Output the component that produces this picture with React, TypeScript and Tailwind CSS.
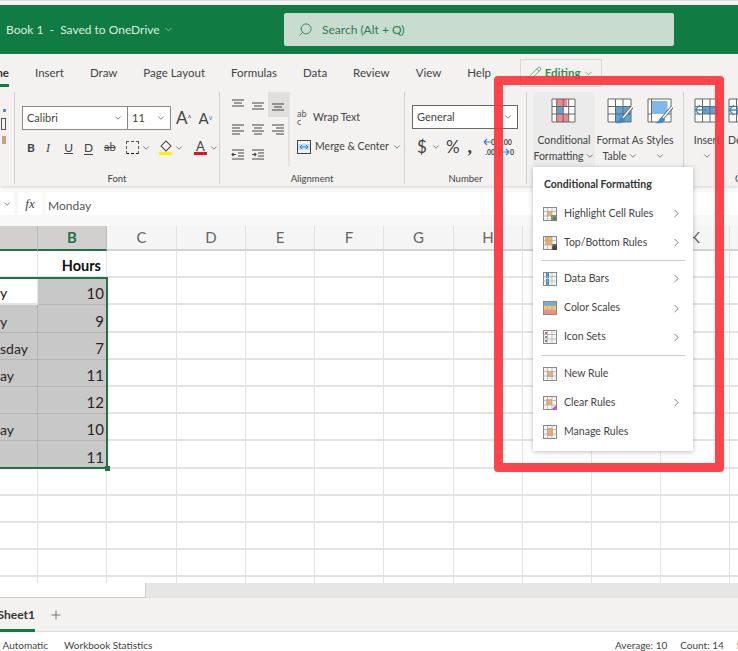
import React from "react";
import { ChevronDown, ChevronRight, Pencil, Plus, Search } from "lucide-react";

const tabs = ["Insert", "Draw", "Page Layout", "Formulas", "Data", "Review", "View", "Help"];
const columns = ["", "B", "C", "D", "E", "F", "G", "H", "I", "J", "K", ""];

const rows = [
  { a: "", b: "Hours" },
  { a: "y", b: "10" },
  { a: "y", b: "9" },
  { a: "sday", b: "7" },
  { a: "ay", b: "11" },
  { a: "", b: "12" },
  { a: "ay", b: "10" },
  { a: "", b: "11" },
  { a: "", b: "" },
  { a: "", b: "" },
  { a: "", b: "" },
  { a: "", b: "" },
  { a: "", b: "" },
];

const Chev = ({ className = "" }: { className?: string }) => (
  <ChevronDown size={10} strokeWidth={1.6} className={`text-[#444] shrink-0 ${className}`} />
);

const Lines = ({ d, color = "#444" }: { d: string; color?: string }) => (
  <svg width="16" height="16" viewBox="0 0 16 16" fill="none" stroke={color} strokeWidth="1.1">
    <path d={d} />
  </svg>
);

const alignIcons = [
  "M2 3h12M4 6h8M2 9h12",
  "M2 6h12M4 9h8M2 12h12",
  "M2 7h12M4 10h8M2 13h12",
  "M2 3h12M2 6h8M2 9h12M2 12h8",
  "M2 3h12M4 6h8M2 9h12M4 12h8",
  "M2 3h12M6 6h8M2 9h12M6 12h8",
];

const MiniGrid = ({ children }: { children?: React.ReactNode }) => (
  <svg width="14" height="14" viewBox="0 0 14 14" className="shrink-0">
    <rect x="0.5" y="0.5" width="13" height="13" fill="#f4f4f4" stroke="#888" />
    {children}
    <path d="M0.5 4.5h13M0.5 9h13M4.5 0.5v13M9 0.5v13" stroke="#aaa" strokeWidth="0.7" fill="none" />
  </svg>
);

const menuIcons: Record<string, React.ReactNode> = {
  "Highlight Cell Rules": (
    <>
      <rect x="4" y="4" width="5" height="5" fill="#f0b060" />
      <rect x="8" y="8" width="6" height="6" fill="#777" />
    </>
  ),
  "Top/Bottom Rules": (
    <>
      <rect x="2" y="1" width="7" height="8" fill="#f0b060" />
      <rect x="9" y="8" width="5" height="6" fill="#444" />
    </>
  ),
  "Data Bars": (
    <>
      <rect x="3" y="1" width="3" height="5" fill="#2b88d8" />
      <rect x="3" y="7" width="3" height="6" fill="#2b88d8" />
    </>
  ),
  "Color Scales": (
    <>
      <rect x="1" y="1" width="12" height="4" fill="#6aaee8" />
      <rect x="1" y="5" width="12" height="4" fill="#f8c860" />
      <rect x="1" y="9" width="12" height="4" fill="#f48a8a" />
    </>
  ),
  "Icon Sets": (
    <>
      <rect x="2" y="2" width="2" height="2" fill="#d86060" />
      <rect x="2" y="6" width="2" height="2" fill="#888" />
      <rect x="2" y="10" width="2" height="2" fill="#888" />
    </>
  ),
  "New Rule": <rect x="4" y="4" width="6" height="6" fill="#f0b060" />,
  "Clear Rules": (
    <>
      <rect x="3" y="3" width="6" height="6" fill="#f0b060" />
      <path d="M8 14l5-5 2 2-5 4z" fill="#b060d0" />
    </>
  ),
  "Manage Rules": <rect x="4" y="3" width="6" height="8" fill="#f0b060" />,
};

const MenuItem = ({ label, arrow = false }: { label: string; arrow?: boolean }) => (
  <div className="h-[29.2px] flex items-center pl-[10px] pr-[10px] text-[10.5px] text-[#444]">
    <MiniGrid>{menuIcons[label]}</MiniGrid>
    <span className="ml-[7px] flex-1">{label}</span>
    {arrow && <ChevronRight size={13} strokeWidth={1.3} className="text-[#444]" />}
  </div>
);

const GroupLabel = ({ text, className = "" }: { text: string; className?: string }) => (
  <div className={`mt-auto text-center text-[9.5px] leading-[10px] text-[#444] ${className}`}>{text}</div>
);

const LargeButton = ({
  icon,
  top,
  bottom,
  className = "",
}: {
  icon: React.ReactNode;
  top: string;
  bottom: string;
  className?: string;
}) => (
  <div className={`shrink-0 flex flex-col items-center pt-[6px] text-[10.5px] leading-[16px] text-[#444] ${className}`}>
    {icon}
    <div className="mt-[8px] whitespace-nowrap">{top}</div>
    <div className="flex items-center gap-[1px] whitespace-nowrap">
      {bottom}
      <Chev />
    </div>
  </div>
);

const TableIcon = ({ fill }: { fill: React.ReactNode }) => (
  <svg width="26" height="26" viewBox="0 0 26 26" fill="none" className="shrink-0">
    <rect x="1" y="1" width="23" height="23" fill="#fff" />
    {fill}
  </svg>
);

const GridLines = () => (
  <path d="M1 1h23v23H1zM1 8.5h23M1 16h23M8.5 1v23M16 1v23" stroke="#666" strokeWidth="1" />
);

const Brush = () => (
  <g>
    <path d="M25 9L15 21" stroke="#666" strokeWidth="3.4" />
    <path d="M25 9L15 21" stroke="#fff" strokeWidth="1.6" />
    <path d="M15 19c-3 1-3 5-7 6 5 1 10 0 10-4z" fill="#3f8ccb" />
  </g>
);

const InsertIcon = () => (
  <TableIcon
    fill={
      <>
        <rect x="9" y="8.5" width="15" height="7.5" fill="#5ba3dd" />
        <GridLines />
        <path d="M12 12H1M1 12l5-5M1 12l5 5" stroke="#3f8ccb" strokeWidth="1.4" />
      </>
    }
  />
);

export default function App() {
  return (
    <div className="w-[738px] h-[651px] overflow-hidden relative bg-white font-['Lato',sans-serif]">
      <div className="h-[5px] bg-[#f4f4f4] border-t border-[#ddd]" />

      {/* title bar */}
      <div className="h-[49px] bg-[#107b43] flex items-center pl-[6px]">
        <div className="flex items-center w-[278px] shrink-0 text-[12px] text-[#dcebe2]">
          <span className="whitespace-pre">Book 1  -  Saved to OneDrive</span>
          <ChevronDown size={11} strokeWidth={1.3} className="ml-[3px]" />
        </div>
        <div className="w-[390px] h-[33px] shrink-0 bg-[#c8dccf] rounded-[2px] flex items-center pl-[14px] text-[12px] text-[#2f7d52]">
          <Search size={15} strokeWidth={1.4} className="-scale-x-100" />
          <span className="ml-[9px]">Search (Alt + Q)</span>
        </div>
      </div>

      <div className="bg-[#f3f2f1] h-[132px] shadow-[0_2px_3px_#ddd]">
        {/* tabs */}
        <div className="h-[38px] flex items-center gap-[26px] -ml-[27px] text-[11.5px] text-[#444] relative">
          <div className="w-[36px] h-[38px] flex items-center justify-end relative font-bold text-[#333]">
            Home
            <div className="absolute bottom-[5px] left-0 right-0 h-[3px] bg-[#107b43]" />
          </div>
          {tabs.map((tab) => (
            <span key={tab} className="whitespace-nowrap">
              {tab}
            </span>
          ))}
          <div className="ml-[3px] w-[82px] h-[28px] border border-[#d9d9d9] flex items-center justify-center gap-[3px] text-[#2f9158] font-bold shrink-0">
            <Pencil size={14} strokeWidth={1.2} />
            Editing
            <ChevronDown size={11} strokeWidth={1.5} />
          </div>
        </div>

        {/* ribbon */}
        <div className="h-[94px] flex">
          <div className="w-[15px] h-[92px] shrink-0 border-r border-[#cfcfcf] flex flex-col items-end pr-[8px] pt-[17px] gap-[6px] text-[#777]">
            <div className="w-[3px] h-[3px] bg-[#4a90d0]" />
            <div className="w-[5px] h-[12px] border border-[#555]" />
            <div className="w-[4px] h-[8px] bg-[#c9a27a]" />
          </div>

          {/* font */}
          <div className="w-[205px] h-[92px] shrink-0 border-r border-[#cfcfcf] flex flex-col pl-[7px] pt-[13px]">
            <div className="flex items-center">
              <div className="w-[106px] h-[24px] bg-white border border-[#888] flex items-center justify-between px-[4px] text-[11px] text-[#444]">
                Calibri
                <Chev />
              </div>
              <div className="w-[43px] h-[24px] bg-white border border-l-0 border-[#888] flex items-center justify-between px-[4px] text-[11px] text-[#444]">
                11
                <Chev />
              </div>
              <span className="ml-[5px] text-[17px] text-[#444]">
                A<sup className="text-[7px] text-[#444]">^</sup>
              </span>
              <span className="ml-[7px] text-[15px] text-[#444]">
                A<sup className="text-[7px] text-[#2b88d8]">v</sup>
              </span>
            </div>
            <div className="flex items-center mt-[6px] pl-[5px] gap-[11px] text-[12px] text-[#444] h-[22px]">
              <span className="w-[9px] font-bold">B</span>
              <span className="w-[9px] italic font-['Liberation_Serif',serif]">I</span>
              <span className="w-[9px] underline">U</span>
              <span className="w-[9px] border-b border-[#444] leading-[13px]">D</span>
              <span className="w-[11px] line-through text-[11px]">ab</span>
              <div className="flex items-center gap-[2px] -mr-[1px]">
                <div className="w-[13px] h-[13px] border border-dashed border-[#555] border-b-black" />
                <Chev />
              </div>
              <div className="flex items-center gap-[2px] -ml-[2px] -mr-[1px]">
                <div className="w-[13px] h-[14px] flex flex-col items-center">
                  <div className="w-[8px] h-[8px] border border-[#444] rotate-45 mt-[1px] mb-[1px]" />
                  <div className="w-[13px] h-[3px] mt-auto bg-[#ffef00]" />
                </div>
                <Chev />
              </div>
              <div className="flex items-center gap-[2px]">
                <div className="w-[13px] flex flex-col items-center leading-[11px] text-[13px]">
                  A
                  <div className="w-[13px] h-[3px] bg-[#e81123]" />
                </div>
                <Chev />
              </div>
            </div>
            <GroupLabel text="Font" className="pr-[7px]" />
          </div>

          {/* alignment */}
          <div className="w-[185px] h-[92px] shrink-0 border-r border-[#cfcfcf] flex flex-col">
            <div className="flex h-[78px]">
              <div className="w-[70px] pl-[8px] grid grid-cols-[20px_20px_20px] grid-rows-[25px_25px_25px] border-r-2 border-[#e4e3e2] mb-[4px]">
                {alignIcons.map((d, i) => (
                  <div key={i} className={`flex items-center justify-center ${i === 2 ? "bg-[#e1dfdd]" : ""}`}>
                    <Lines d={d} />
                  </div>
                ))}
                <div className="flex items-center justify-center">
                  <Lines d="M2 3h12M8 6h6M8 9h6M2 12h12M6 7.5H2M3.5 6L2 7.5 3.5 9" />
                </div>
                <div className="flex items-center justify-center">
                  <Lines d="M2 3h12M8 6h6M8 9h6M2 12h12M2 7.5h4M4.5 6L6 7.5 4.5 9" />
                </div>
              </div>
              <div className="pl-[7px] pt-[17px] text-[10.5px] text-[#444] flex flex-col gap-[12px]">
                <div className="flex items-center gap-[3px] h-[17px]">
                  <span className="text-[9px] leading-[8px] w-[13px] text-[#555]">ab c</span>
                  Wrap Text
                </div>
                <div className="flex items-center gap-[3px] h-[17px] whitespace-nowrap">
                  <svg width="14" height="14" viewBox="0 0 14 14" fill="none" className="mr-[1px]">
                    <rect x="0.5" y="0.5" width="13" height="13" stroke="#444" />
                    <rect x="1" y="4" width="12" height="6" fill="#bfdcf3" />
                    <path d="M3 7h8M3 7l2-2M3 7l2 2M11 7L9 5M11 7L9 9" stroke="#2b88d8" />
                  </svg>
                  Merge &amp; Center
                  <Chev />
                </div>
              </div>
            </div>
            <GroupLabel text="Alignment" />
          </div>

          {/* number */}
          <div className="w-[122px] h-[92px] shrink-0 border-r border-[#cfcfcf] flex flex-col pl-[7px] pt-[13px]">
            <div className="w-[106px] h-[24px] bg-white border border-[#666] flex items-center justify-between px-[4px] text-[11px] text-[#444]">
              General
              <Chev />
            </div>
            <div className="flex items-center mt-[7px] pl-[5px] h-[22px] text-[#444]">
              <span className="text-[17px]">$</span>
              <Chev className="ml-[4px]" />
              <span className="ml-[5px] text-[17px]">%</span>
              <span className="ml-[8px] text-[18px] font-bold font-['Liberation_Serif',serif] leading-[14px]">,</span>
              <div className="ml-[8px] w-[15px] flex flex-col items-end gap-[1px] text-[7px] leading-[9px] font-bold">
                <span className="flex items-center">
                  <svg width="8" height="8" viewBox="0 0 8 8" fill="none" stroke="#2b88d8" strokeWidth="1.2">
                    <path d="M8 4H1M1 4l3-3M1 4l3 3" />
                  </svg>
                  0
                </span>
                <span>.00</span>
              </div>
              <div className="ml-[7px] w-[15px] flex flex-col items-start gap-[1px] text-[7px] leading-[9px] font-bold">
                <span>.00</span>
                <span className="flex items-center">
                  <svg width="8" height="8" viewBox="0 0 8 8" fill="none" stroke="#2b88d8" strokeWidth="1.2">
                    <path d="M0 4h7M7 4L4 1M7 4L4 7" />
                  </svg>
                  0
                </span>
              </div>
            </div>
            <GroupLabel text="Number" className="pr-[7px]" />
          </div>

          {/* styles */}
          <div className="w-[157px] h-[92px] shrink-0 border-r border-[#cfcfcf] flex pl-[6px]">
            <LargeButton
              className="w-[62px] h-[75px] bg-[#ebebeb]"
              top="Conditional"
              bottom="Formatting"
              icon={
                <TableIcon
                  fill={
                    <>
                      <rect x="5.7" y="1" width="10.5" height="7.5" fill="#f4858d" />
                      <rect x="5.7" y="8.5" width="6.5" height="7.5" fill="#5ba3dd" />
                      <rect x="5.7" y="16" width="12" height="8" fill="#f4858d" />
                      <path d="M1 1h23v23H1zM1 8.5h23M1 16h23M5.7 1v23M12.2 1v23M17.7 1v23" stroke="#666" strokeWidth="1" />
                    </>
                  }
                />
              }
            />
            <LargeButton
              className="w-[50px]"
              top="Format As"
              bottom="Table"
              icon={
                <TableIcon
                  fill={
                    <>
                      <rect x="8.5" y="8.5" width="15.5" height="15.5" fill="#5ba3dd" />
                      <GridLines />
                      <Brush />
                    </>
                  }
                />
              }
            />
            <div className="w-[30px] shrink-0 flex flex-col items-center pt-[6px] text-[10.5px] leading-[16px] text-[#444]">
              <TableIcon
                fill={
                  <>
                    <rect x="4.5" y="3" width="16" height="13" fill="#7fb8ea" />
                    <path d="M1 1h23v23H1zM1 16h4M20 16h4M4.5 1v23" stroke="#666" strokeWidth="1" />
                    <Brush />
                  </>
                }
              />
              <div className="mt-[8px]">Styles</div>
              <Chev className="mt-[3px]" />
            </div>
          </div>

          {/* cells */}
          <div className="flex-1 h-[92px] flex flex-col pl-[10px] pt-[6px] text-[10.5px] text-[#444] leading-[16px]">
            <div className="flex gap-[8px]">
              <div className="w-[26px] shrink-0 flex flex-col items-center">
                <InsertIcon />
                <div className="mt-[8px]">Insert</div>
                <Chev className="mt-[3px]" />
              </div>
              <div className="w-[26px] shrink-0 flex flex-col items-center">
                <InsertIcon />
                <div className="mt-[8px] w-[26px]">Delete</div>
              </div>
            </div>
            <GroupLabel text="Cells" className="text-left pl-[41px]" />
          </div>
        </div>
      </div>

      {/* formula bar */}
      <div className="h-[36px] mt-[4px] bg-[#f8f8f8] flex gap-[4px] items-start pt-[2px]">
        <div className="w-[14px] h-[23px] bg-white flex items-center justify-end pr-[2px]">
          <Chev />
        </div>
        <div className="w-[24px] h-[23px] bg-white flex items-center justify-center text-[13px] italic font-['Liberation_Serif',serif] text-[#444]">
          fx
        </div>
        <div className="flex-1 h-[23px] bg-white flex items-center pl-[2px] pt-[5px] text-[12px] text-[#555]">Monday</div>
      </div>

      {/* sheet */}
      <div className="h-[357px] overflow-hidden relative">
        <div className="grid grid-cols-[38px_69px_70px_69px_69px_69px_70px_69px_69px_69px_69px_69px] grid-rows-[25px] auto-rows-[27.2px]">
          {columns.map((col, i) => (
            <div
              key={i}
              className={
                i < 2
                  ? "flex items-center justify-center border-r border-b-2 border-r-[#bbb] border-b-[#217346] bg-[#d2d0ce] text-[15px] font-bold text-[#217346]"
                  : "flex items-center justify-center border-r border-b-2 border-r-[#e1e1e1] border-b-[#d4d4d4] bg-[#f5f5f5] text-[15px] text-[#666]"
              }
            >
              {col}
            </div>
          ))}
          {rows.map((row, r) =>
            columns.map((_, c) => {
              const selected = r >= 1 && r <= 7 && (c === 1 || (c === 0 && r > 1));
              const text = c === 0 ? row.a : c === 1 ? row.b : "";
              return (
                <div
                  key={`${r}-${c}`}
                  className={
                    selected
                      ? "border-r border-b border-[#b5b5b5] bg-[#c8c8c8] flex items-end text-[15px] leading-[21px] text-[#2c2424]"
                      : "border-r border-b-2 border-r-[#e3e3e3] border-b-[#e3e3e3] flex items-end text-[15px] leading-[21px] text-[#111]"
                  }
                >
                  <span
                    className={
                      c === 1
                        ? `w-full text-right pr-[2px] ${r === 0 ? "font-bold pr-[5px] text-[14.5px]" : ""}`
                        : "text-[14px]"
                    }
                  >
                    {text}
                  </span>
                </div>
              );
            }),
          )}
        </div>
        <div className="absolute left-[-3px] top-[51px] w-[111px] h-[192px] border-2 border-[#217346] pointer-events-none" />
        <div className="absolute left-[105px] top-[240px] w-[5px] h-[5px] bg-[#217346]" />
      </div>

      {/* scrollbar */}
      <div className="h-[15px] bg-[#e6e6e6]">
        <div className="w-[146px] h-[15px] bg-white border-r border-b border-[#ccc]" />
      </div>

      {/* sheet tabs */}
      <div className="h-[34px] bg-[#f3f2f1] flex items-center border-b border-[#ddd]">
        <div className="w-[35px] h-[34px] flex items-center justify-end relative text-[12px] font-bold text-[#333]">
          Sheet1
          <div className="absolute bottom-0 left-0 right-0 h-[3px] bg-[#107b43]" />
        </div>
        <Plus size={14} strokeWidth={1.2} className="ml-[14px] text-[#444]" />
      </div>

      {/* status bar */}
      <div className="h-[19px] flex items-center justify-between text-[10px] text-[#444] whitespace-nowrap pt-[8px]">
        <div className="flex gap-[16px] -ml-[5px]">
          <span>e Automatic</span>
          <span>Workbook Statistics</span>
        </div>
        <div className="flex gap-[13px] -mr-[18px]">
          <span>Average: 10</span>
          <span>Count: 14</span>
          <span>Sum</span>
        </div>
      </div>

      {/* dropdown */}
      <div className="absolute left-[533px] top-[167px] w-[160px] h-[284px] bg-white shadow-[0_1px_5px_rgba(0,0,0,0.25)] pt-[9px]">
        <div className="px-[11px] text-[10.5px] font-bold text-[#333] leading-[16px] mb-[7px]">Conditional Formatting</div>
        <MenuItem label="Highlight Cell Rules" arrow />
        <MenuItem label="Top/Bottom Rules" arrow />
        <div className="mx-[8px] my-[3px] border-t border-[#c8c8c8]" />
        <MenuItem label="Data Bars" arrow />
        <MenuItem label="Color Scales" arrow />
        <MenuItem label="Icon Sets" arrow />
        <div className="mx-[8px] my-[3px] border-t border-[#c8c8c8]" />
        <MenuItem label="New Rule" />
        <MenuItem label="Clear Rules" arrow />
        <MenuItem label="Manage Rules" />
      </div>

      {/* red highlight */}
      <div className="absolute left-[494px] top-[76px] w-[230px] h-[396px] border-[9px] border-[#ff3038]/90 rounded-[4px] pointer-events-none" />
    </div>
  );
}
